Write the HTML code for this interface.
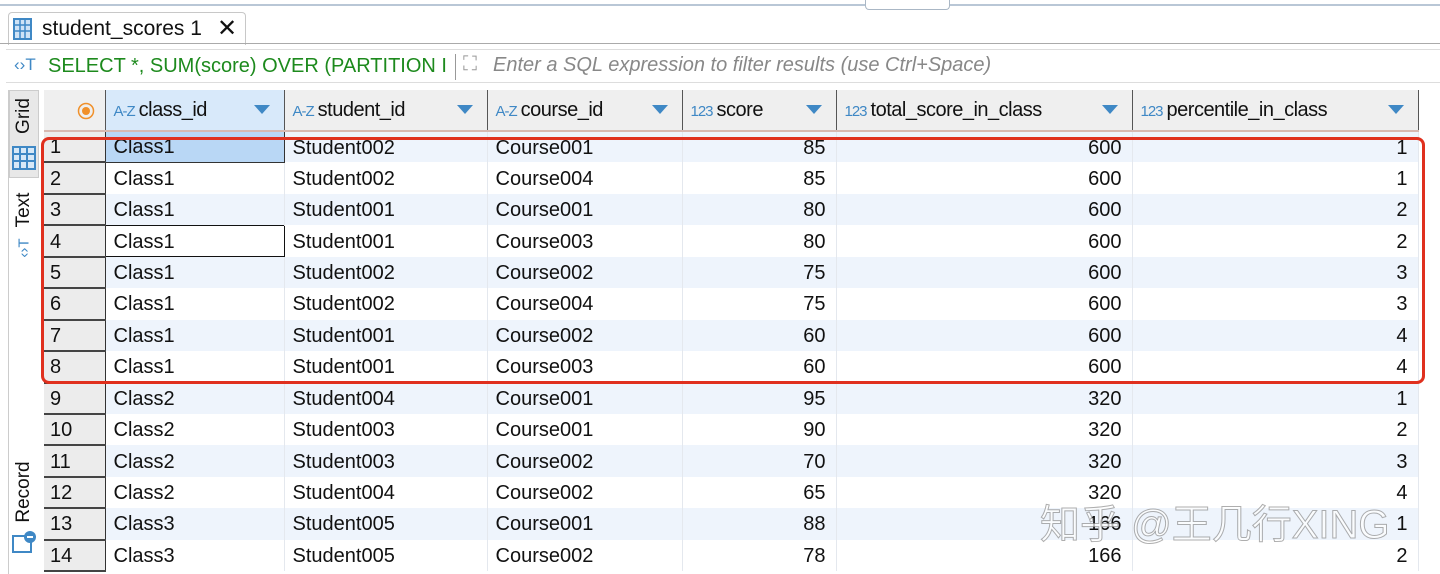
<!DOCTYPE html>
<html><head><meta charset="utf-8"><style>
*{box-sizing:border-box;margin:0;padding:0}
body{width:1440px;height:574px;overflow:hidden;background:#fff;font-family:"Liberation Sans","Noto Sans CJK SC",sans-serif;position:relative;color:#111}
.abs{position:absolute}
table{position:absolute;left:44px;top:90px;border-collapse:collapse;table-layout:fixed}
td{font-size:20px;height:31.45px;padding:2px 8px 0;white-space:nowrap;overflow:hidden;border-right:1px solid #e4e8ee}
th{height:41px;background:#efefef;font-weight:normal;font-size:20px;text-align:left;padding:0 8px;border-right:1px solid #555;border-bottom:2px solid #d8b8b0;position:relative;letter-spacing:-0.5px}
th .t{font-size:15px;color:#3f88c5;margin-right:4px;letter-spacing:-1px}
th .arr{position:absolute;right:14px;top:15px;width:0;height:0;border-left:8px solid transparent;border-right:8px solid transparent;border-top:9px solid #3f88c5}
tr.o td{background:#eef4fc}
td.n{background:#ececec !important;border-right:1px solid #333;border-bottom:2px solid #444;padding-left:6px}
td.r{text-align:right;padding-right:10px}
</style></head><body>
<div class="abs" style="left:0;top:4px;width:1440px;height:2px;background:#b9c7d6"></div>
<div class="abs" style="left:865px;top:0;width:85px;height:10px;border:1px solid #aab7c5;border-top:none;background:#fff;border-radius:0 0 4px 4px"></div>
<div class="abs" style="left:8px;top:12px;width:238px;height:33px;border:1px solid #c8c8c8;border-bottom:none;border-radius:4px 4px 0 0;background:#fff"></div>
<div class="abs" style="left:0;top:43px;width:1440px;height:1px;background:#aaa"></div>
<svg class="abs" style="left:13px;top:18px" width="20" height="22"><rect x="1" y="1" width="17" height="20" fill="#cfe3f6" stroke="#3f88c5" stroke-width="2"/><path d="M1 7H18M1 13H18M7 1V21M12 1V21" stroke="#3f88c5" stroke-width="1.5"/></svg>
<div class="abs" style="left:42px;top:17px;font-size:21px">student_scores 1</div>
<div class="abs" style="left:217px;top:14px;font-size:24px">✕</div>
<div class="abs" style="left:6px;top:49px;width:1434px;height:34px;border-top:1px solid #ddd;border-bottom:1px solid #ddd"></div>
<div class="abs" style="left:14px;top:55px;font-size:17px;color:#3f88c5">‹›T</div>
<div class="abs" style="left:48px;top:55px;font-size:20px;color:#1d8a1d">SELECT *, SUM(score) OVER (PARTITION I</div>
<div class="abs" style="left:455px;top:54px;width:1px;height:26px;background:#999"></div>
<div class="abs" style="left:463px;top:53px;font-size:20px;color:#999">⛶</div>
<div class="abs" style="left:493px;top:54px;font-size:20px;color:#888;font-style:italic">Enter a SQL expression to filter results (use Ctrl+Space)</div>
<div class="abs" style="left:8px;top:90px;width:1px;height:484px;background:#ccc"></div>
<div class="abs" style="left:9px;top:90px;width:30px;height:88px;background:#e8e8e8;border:1px solid #ccc"></div>
<div class="abs" style="left:24px;top:116px;transform:translate(-50%,-50%) rotate(-90deg);font-size:19px">Grid</div>
<svg class="abs" style="left:12px;top:146px" width="24" height="24"><rect x="1" y="1" width="22" height="22" fill="#d7e8f7" stroke="#3f88c5" stroke-width="2"/><path d="M1 8H23M1 15H23M8 1V23M15 1V23" stroke="#3f88c5" stroke-width="2"/></svg>
<div class="abs" style="left:24px;top:210px;transform:translate(-50%,-50%) rotate(-90deg);font-size:19px">Text</div>
<div class="abs" style="left:24px;top:248px;transform:translate(-50%,-50%) rotate(-90deg);font-size:15px;color:#3f88c5">‹›T</div>
<div class="abs" style="left:24px;top:492px;transform:translate(-50%,-50%) rotate(-90deg);font-size:19px">Record</div>
<svg class="abs" style="left:12px;top:530px" width="26" height="24"><rect x="1" y="6" width="18" height="16" fill="#fff" stroke="#3f88c5" stroke-width="2"/><circle cx="18" cy="7" r="6" fill="#3f88c5"/><path d="M15 7H21" stroke="#fff" stroke-width="2"/></svg>
<table>
<colgroup><col style="width:61px"><col style="width:179px"><col style="width:203px"><col style="width:195px"><col style="width:154px"><col style="width:296px"><col style="width:286px"></colgroup>
<tr><th style="background:#efefef;border-right:1px solid #555"><svg style="position:absolute;right:10px;top:12px" width="18" height="18"><circle cx="9" cy="9" r="7.5" fill="none" stroke="#f0902a" stroke-width="1.5"/><circle cx="9" cy="9" r="4" fill="#f0902a"/></svg></th>
<th style="background:#d8e9fa;border-left:1px solid #555"><span class="t">A-Z</span>class_id<span class="arr"></span></th>
<th><span class="t">A-Z</span>student_id<span class="arr"></span></th>
<th><span class="t">A-Z</span>course_id<span class="arr"></span></th>
<th><span class="t">123</span>score<span class="arr"></span></th>
<th><span class="t">123</span>total_score_in_class<span class="arr"></span></th>
<th><span class="t">123</span>percentile_in_class<span class="arr"></span></th></tr>
<tr class="o"><td class="n">1</td><td style="background:#b9d7f5;border:1px solid #333">Class1</td><td>Student002</td><td>Course001</td><td class="r">85</td><td class="r">600</td><td class="r">1</td></tr>
<tr><td class="n">2</td><td>Class1</td><td>Student002</td><td>Course004</td><td class="r">85</td><td class="r">600</td><td class="r">1</td></tr>
<tr class="o"><td class="n">3</td><td>Class1</td><td>Student001</td><td>Course001</td><td class="r">80</td><td class="r">600</td><td class="r">2</td></tr>
<tr><td class="n">4</td><td style="border:1.5px solid #111">Class1</td><td>Student001</td><td>Course003</td><td class="r">80</td><td class="r">600</td><td class="r">2</td></tr>
<tr class="o"><td class="n">5</td><td>Class1</td><td>Student002</td><td>Course002</td><td class="r">75</td><td class="r">600</td><td class="r">3</td></tr>
<tr><td class="n">6</td><td>Class1</td><td>Student002</td><td>Course004</td><td class="r">75</td><td class="r">600</td><td class="r">3</td></tr>
<tr class="o"><td class="n">7</td><td>Class1</td><td>Student001</td><td>Course002</td><td class="r">60</td><td class="r">600</td><td class="r">4</td></tr>
<tr><td class="n">8</td><td>Class1</td><td>Student001</td><td>Course003</td><td class="r">60</td><td class="r">600</td><td class="r">4</td></tr>
<tr class="o"><td class="n">9</td><td>Class2</td><td>Student004</td><td>Course001</td><td class="r">95</td><td class="r">320</td><td class="r">1</td></tr>
<tr><td class="n">10</td><td>Class2</td><td>Student003</td><td>Course001</td><td class="r">90</td><td class="r">320</td><td class="r">2</td></tr>
<tr class="o"><td class="n">11</td><td>Class2</td><td>Student003</td><td>Course002</td><td class="r">70</td><td class="r">320</td><td class="r">3</td></tr>
<tr><td class="n">12</td><td>Class2</td><td>Student004</td><td>Course002</td><td class="r">65</td><td class="r">320</td><td class="r">4</td></tr>
<tr class="o"><td class="n">13</td><td>Class3</td><td>Student005</td><td>Course001</td><td class="r">88</td><td class="r">166</td><td class="r">1</td></tr>
<tr><td class="n">14</td><td>Class3</td><td>Student005</td><td>Course002</td><td class="r">78</td><td class="r">166</td><td class="r">2</td></tr>
</table>
<div class="abs" style="left:41px;top:137px;width:1384px;height:247px;border:3px solid #e0301e;border-radius:8px"></div>
<div class="abs" style="left:1040px;top:492px;font-size:40px;color:rgba(255,255,255,0.7);-webkit-text-stroke:1px rgba(120,120,120,0.6);white-space:nowrap">知乎 @王几行XING</div>
</body></html>
